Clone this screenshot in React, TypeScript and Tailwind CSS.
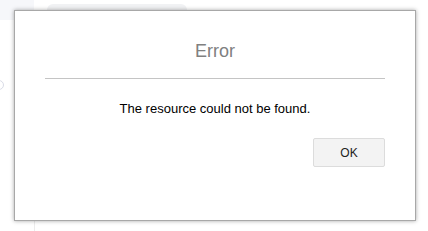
export default function App() {
  return (
    <div className="relative w-[428px] h-[231px] overflow-hidden bg-white font-['Liberation_Sans',Arial,sans-serif]">
      {/* faint page behind the modal */}
      <div className="absolute left-0 top-0 w-[34px] h-[20px] bg-[#f6f7fa]" />
      <div className="absolute left-[47px] top-[4px] w-[140px] h-[8px] rounded-t-[6px] bg-[#f1f2f4]" />
      <div className="absolute left-[34px] top-[200px] w-px h-[31px] bg-[#ececec]" />
      <div className="absolute left-[-6px] top-[80px] w-[10px] h-[10px] rounded-full border border-[#d9dbe6]" />

      {/* modal */}
      <div className="absolute left-[14px] top-[10px] w-[402px] h-[211px] border border-[#a8a8a8] bg-white shadow-[0_0_4px_rgba(0,0,0,0.35)]">
        <div className="px-[30px] pt-[29px] flex flex-col">
          <h2 className="text-center text-[18px] leading-[22px] text-[#808080]">Error</h2>
          <div className="mt-[16px] h-px bg-[#c4c4c4]" />
          <p className="mt-[22px] text-center text-[13px] leading-[16px] text-black">
            The resource could not be found.
          </p>
          <div className="mt-[21px] flex justify-end">
            <button className="w-[72px] h-[29px] rounded-[2px] border border-[#dcdcdc] bg-[#f3f3f3] text-[12px] text-[#222]">
              OK
            </button>
          </div>
        </div>
      </div>
    </div>
  );
}
